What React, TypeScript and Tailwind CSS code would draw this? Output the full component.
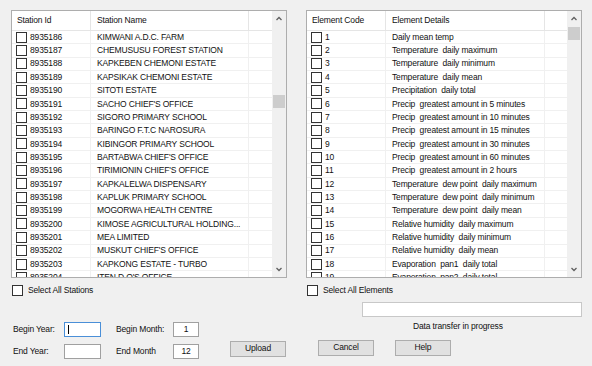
const stations: [string, string][] = [
  ["8935186", "KIMWANI A.D.C. FARM"],
  ["8935187", "CHEMUSUSU FOREST STATION"],
  ["8935188", "KAPKEBEN CHEMONI ESTATE"],
  ["8935189", "KAPSIKAK CHEMONI ESTATE"],
  ["8935190", "SITOTI ESTATE"],
  ["8935191", "SACHO CHIEF'S OFFICE"],
  ["8935192", "SIGORO PRIMARY SCHOOL"],
  ["8935193", "BARINGO F.T.C NAROSURA"],
  ["8935194", "KIBINGOR PRIMARY SCHOOL"],
  ["8935195", "BARTABWA CHIEF'S OFFICE"],
  ["8935196", "TIRIMIONIN CHIEF'S OFFICE"],
  ["8935197", "KAPKALELWA DISPENSARY"],
  ["8935198", "KAPLUK PRIMARY SCHOOL"],
  ["8935199", "MOGORWA HEALTH CENTRE"],
  ["8935200", "KIMOSE AGRICULTURAL HOLDING..."],
  ["8935201", "MEA LIMITED"],
  ["8935202", "MUSKUT CHIEF'S OFFICE"],
  ["8935203", "KAPKONG ESTATE - TURBO"],
  ["8935204", "ITEN D.O'S OFFICE"],
];

const elements: [string, string][] = [
  ["1", "Daily mean temp"],
  ["2", "Temperature  daily maximum"],
  ["3", "Temperature  daily minimum"],
  ["4", "Temperature  daily mean"],
  ["5", "Precipitation  daily total"],
  ["6", "Precip  greatest amount in 5 minutes"],
  ["7", "Precip  greatest amount in 10 minutes"],
  ["8", "Precip  greatest amount in 15 minutes"],
  ["9", "Precip  greatest amount in 30 minutes"],
  ["10", "Precip  greatest amount in 60 minutes"],
  ["11", "Precip  greatest amount in 2 hours"],
  ["12", "Temperature  dew point  daily maximum"],
  ["13", "Temperature  dew point  daily minimum"],
  ["14", "Temperature  dew point  daily mean"],
  ["15", "Relative humidity  daily maximum"],
  ["16", "Relative humidity  daily minimum"],
  ["17", "Relative humidity  daily mean"],
  ["18", "Evaporation  pan1  daily total"],
  ["19", "Evaporation  pan2  daily total"],
];

function Box() {
  return <span className="w-[11px] h-[11px] shrink-0 border border-[#333333] bg-white" />;
}

function Chevron({ down }: { down?: boolean }) {
  return (
    <svg width="8" height="6" viewBox="0 0 8 6" className="mx-auto">
      <path
        d={down ? "M1.5 2 L4 4.5 L6.5 2" : "M1.5 4 L4 1.5 L6.5 4"}
        fill="none"
        stroke="#606060"
        strokeWidth="1.3"
      />
    </svg>
  );
}

interface ListProps {
  head: [string, string];
  rows: [string, string][];
  col2: string;
  thumb: string;
}

function CheckList({ head, rows, col2, thumb }: ListProps) {
  return (
    <div className="w-[276px] h-[268px] border border-[#adadad] bg-white flex">
      <div className="flex-1 overflow-hidden">
        <div className="h-[20px] flex border-b border-[#e5e5e5]">
          <div className="w-[79px] shrink-0 border-r border-[#e5e5e5] flex items-center pl-[5px]">{head[0]}</div>
          <div className={`${col2} shrink-0 border-r border-[#e5e5e5] flex items-center pl-[6px]`}>{head[1]}</div>
          <div className="flex-1" />
        </div>
        {rows.map(([code, name]) => (
          <div key={code} className="h-[13.35px] flex border-b border-[#f0f0f0]">
            <div className="w-[79px] shrink-0 border-r border-[#f0f0f0] flex items-center gap-[3px] pl-[4px]">
              <Box />
              <span>{code}</span>
            </div>
            <div className={`${col2} shrink-0 border-r border-[#f0f0f0] flex items-center pl-[6px] whitespace-pre`}>
              {name}
            </div>
            <div className="flex-1" />
          </div>
        ))}
      </div>
      <div className="w-[14px] shrink-0 bg-[#f0f0f0] flex flex-col">
        <div className="h-[16px] flex items-center">
          <Chevron />
        </div>
        <div className={`${thumb} ml-[1px] w-[12px] h-[13px] bg-[#cdcdcd]`} />
        <div className="flex-1" />
        <div className="h-[16px] flex items-center">
          <Chevron down />
        </div>
      </div>
    </div>
  );
}

function Field({ value, focused }: { value?: string; focused?: boolean }) {
  return (
    <div
      className={`w-[37px] h-[15px] bg-white border flex items-center ${
        focused ? "border-[#4a8fd8] justify-start pl-[3px]" : "border-[#a0a0a0] justify-center"
      }`}
    >
      {focused ? <span className="w-[1px] h-[9px] bg-black" /> : value}
    </div>
  );
}

function SmallField({ value }: { value: string }) {
  return (
    <div className="w-[26px] h-[15px] bg-white border border-[#a0a0a0] flex items-center justify-center">
      {value}
    </div>
  );
}

function Button({ label }: { label: string }) {
  return (
    <button className="w-[56px] h-[16px] bg-[#e1e1e1] border border-[#adadad] flex items-center justify-center">
      {label}
    </button>
  );
}

export default function App() {
  return (
    <div className="w-[592px] h-[366px] bg-[#f0f0f0] pt-[10px] pl-[11px] flex gap-[19px] text-[8.5px] tracking-[-0.15px] text-[#111111] font-['Liberation_Sans',Arial,sans-serif] overflow-hidden">
      <div className="flex flex-col w-[276px]">
        <CheckList head={["Station Id", "Station Name"]} rows={stations} col2="w-[158px]" thumb="mt-[68px]" />
        <div className="mt-[6px] flex items-center gap-[5px] pl-[1px]">
          <Box />
          <span>Select All Stations</span>
        </div>
        <div className="mt-[25px] flex">
          <div className="flex flex-col gap-[7px] pl-[2px]">
            <div className="flex items-center h-[15px]">
              <span className="w-[51px]">Begin Year:</span>
              <Field focused />
            </div>
            <div className="flex items-center h-[15px]">
              <span className="w-[51px]">End Year:</span>
              <Field />
            </div>
          </div>
          <div className="flex flex-col gap-[7px] ml-[15px]">
            <div className="flex items-center h-[15px]">
              <span className="w-[57px]">Begin Month:</span>
              <SmallField value="1" />
            </div>
            <div className="flex items-center h-[15px]">
              <span className="w-[57px]">End Month</span>
              <SmallField value="12" />
            </div>
          </div>
          <div className="ml-[31px] mt-[19px]">
            <Button label="Upload" />
          </div>
        </div>
      </div>
      <div className="flex flex-col w-[276px]">
        <CheckList head={["Element Code", "Element Details"]} rows={elements} col2="w-[159px]" thumb="mt-0" />
        <div className="mt-[6px] flex items-center gap-[5px] pl-[1px]">
          <Box />
          <span>Select All Elements</span>
        </div>
        <div className="mt-[5px] ml-[56px] h-[15px] bg-white border border-[#c8c8c8]" />
        <div className="mt-[3px] ml-[107px]">Data transfer in progress</div>
        <div className="mt-[7px] ml-[12px] flex gap-[21px]">
          <Button label="Cancel" />
          <Button label="Help" />
        </div>
      </div>
    </div>
  );
}
